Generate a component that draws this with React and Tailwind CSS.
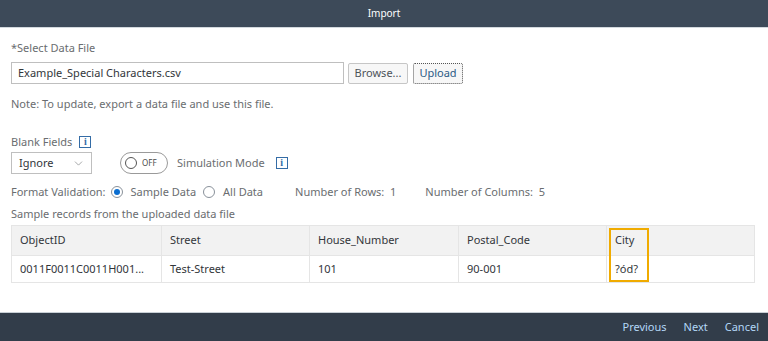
import { ChevronDown } from "lucide-react";

const COLUMNS = ["ObjectID", "Street", "House_Number", "Postal_Code", "City"];
const ROW = ["0011F0011C0011H001...", "Test-Street", "101", "90-001", "?ód?"];

function InfoIcon() {
  return (
    <span className="inline-flex h-[12px] w-[12px] items-center justify-center border border-[#346ca6] text-[10px] font-bold leading-none text-[#346ca6] [font-family:'Liberation_Serif',serif]">
      i
    </span>
  );
}

function Radio({ checked }) {
  return (
    <span className="inline-flex h-[12px] w-[12px] items-center justify-center rounded-full border border-[#89919a] bg-white">
      {checked && <span className="h-[6px] w-[6px] rounded-full bg-[#0a6ed1]" />}
    </span>
  );
}

export default function App() {
  return (
    <div className="flex h-[341px] w-[768px] flex-col bg-white text-[11px] [font-family:'Noto_Sans',sans-serif]">
      {/* Header */}
      <div className="flex h-[28px] shrink-0 items-center justify-center border-b border-[#d3d9de] bg-[#3d4a59] pb-[1px] text-[10px] text-white">
        Import
      </div>

      {/* Body */}
      <div className="flex flex-1 flex-col px-[11px]">
        <div className="mt-[13px] leading-[14px] text-[#6a6d70]">*Select Data File</div>

        <div className="mt-[7px] flex items-center">
          <div className="flex h-[22px] w-[333px] items-center border border-[#bfbfbf] px-[6px] text-[#32363a]">
            Example_Special Characters.csv
          </div>
          <button className="ml-[4px] h-[21px] w-[60px] rounded-[2px] border border-[#c6c6c6] bg-[#f7f7f7] text-[#4d5359]">
            Browse...
          </button>
          <button className="ml-[5px] h-[21px] w-[50px] rounded-[2px] border border-dotted border-[#555] bg-[#f7f7f7] text-[#2b5a86]">
            Upload
          </button>
        </div>

        <div className="mt-[13px] leading-[14px] text-[#6a6d70]">Note: To update, export a data file and use this file.</div>

        <div className="mt-[24px] flex items-center gap-[7px] leading-[14px] text-[#6a6d70]">
          Blank Fields <InfoIcon />
        </div>

        <div className="mt-[3px] flex items-center">
          <div className="flex h-[22px] w-[81px] items-center justify-between border border-[#bfbfbf] pl-[7px] pr-[6px] text-[#32363a]">
            Ignore
            <ChevronDown size={13} strokeWidth={1.1} className="text-[#6a6d70]" />
          </div>
          <div className="ml-[28px] flex h-[22px] w-[48px] items-center rounded-full border border-[#9a9a9a] pl-[4px]">
            <span className="h-[12px] w-[12px] rounded-full border border-[#555]" />
            <span className="ml-[5px] text-[8px] text-[#4a4a4a]">OFF</span>
          </div>
          <span className="ml-[9px] text-[#6a6d70]">Simulation Mode</span>
          <span className="ml-[11px] flex"><InfoIcon /></span>
        </div>

        <div className="mt-[11px] flex items-center leading-[14px] text-[#6a6d70]">
          <span>Format Validation:</span>
          <span className="ml-[5px] flex"><Radio checked /></span>
          <span className="ml-[8px]">Sample Data</span>
          <span className="ml-[7px] flex"><Radio /></span>
          <span className="ml-[8px]">All Data</span>
          <span className="ml-[32px]">Number of Rows:&nbsp; 1</span>
          <span className="ml-[29px]">Number of Columns:&nbsp; 5</span>
        </div>

        <div className="mt-[8px] leading-[14px] text-[#6a6d70]">Sample records from the uploaded data file</div>

        {/* Table */}
        <div className="mt-[4px] w-[744px] border border-[#e5e5e5] text-[#32363a]">
          <div className="grid h-[29px] grid-cols-[149px_148px_149px_148px_1fr] bg-[#f2f2f2]">
            {COLUMNS.map((c, i) => (
              <div key={c} className={`relative flex items-center pl-[8px] ${i > 0 ? "border-l border-[#e5e5e5]" : ""}`}>
                {c}
                {c === "City" && (
                  <span className="absolute left-[2px] top-[2px] h-[54px] w-[40px] border-2 border-[#f0ab00]" />
                )}
              </div>
            ))}
          </div>
          <div className="grid h-[27px] grid-cols-[149px_148px_149px_148px_1fr] border-t border-[#e5e5e5]">
            {ROW.map((v, i) => (
              <div key={i} className={`flex items-center pl-[8px] ${i > 0 ? "border-l border-[#e5e5e5]" : ""}`}>
                {v}
              </div>
            ))}
          </div>
        </div>
      </div>

      {/* Footer */}
      <div className="flex h-[29px] shrink-0 items-center justify-end gap-[17px] border-t border-[#c9d0d6] bg-[#323d4a] pr-[9px] text-[11px] text-[#b3d7f7]">
        <span>Previous</span>
        <span>Next</span>
        <span>Cancel</span>
      </div>
    </div>
  );
}
